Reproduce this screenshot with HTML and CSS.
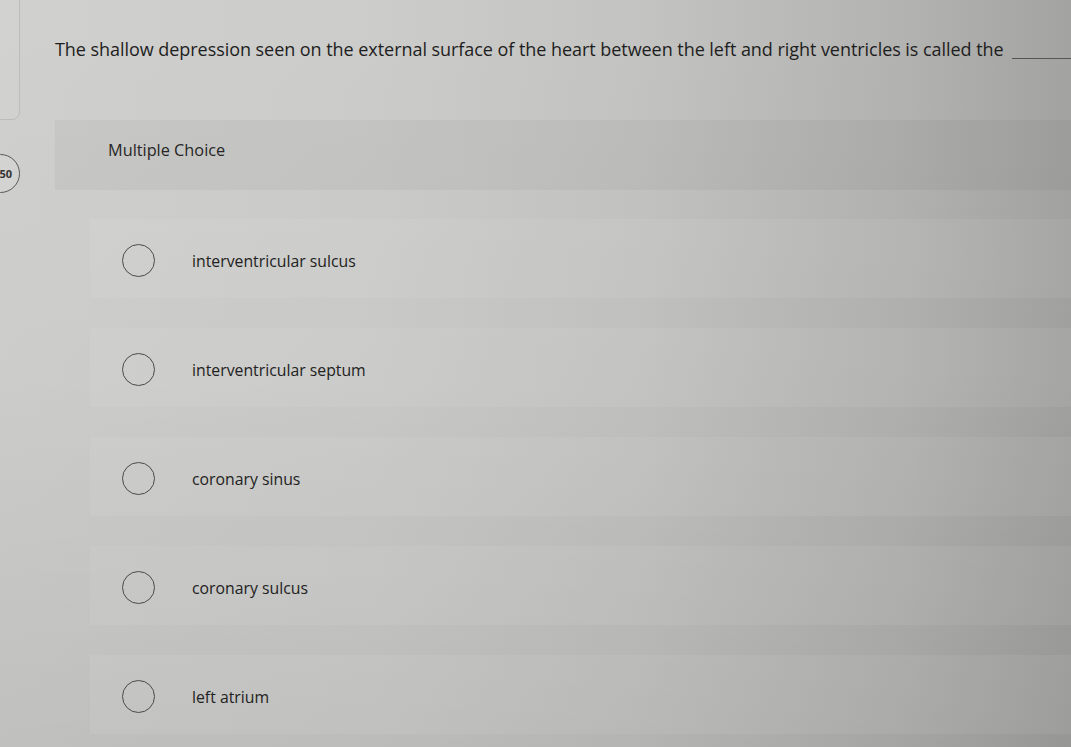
FILE: index.html
```html
<!DOCTYPE html>
<html>
<head>
<meta charset="utf-8">
<link rel="stylesheet" href="styles.css">
</head>
<body>
<div class="page">
  <aside class="rail">
    <div class="rail-card"></div>
    <div class="badge">50</div>
  </aside>
  <main class="main">
    <p class="question">The shallow depression seen on the external surface of the heart between the left and right ventricles is called the <span class="blank"></span></p>
    <div class="type-band"><span class="type-label">Multiple Choice</span></div>
    <ul class="options">
      <li class="option"><span class="radio"></span><span class="label">interventricular sulcus</span></li>
      <li class="option"><span class="radio"></span><span class="label">interventricular septum</span></li>
      <li class="option"><span class="radio"></span><span class="label">coronary sinus</span></li>
      <li class="option"><span class="radio"></span><span class="label">coronary sulcus</span></li>
      <li class="option"><span class="radio"></span><span class="label">left atrium</span></li>
    </ul>
  </main>
  <div class="edge"></div>
</div>
</body>
</html>
```

FILE: styles.css
```css
html, body {
  margin: 0;
  padding: 0;
}
body {
  width: 1071px;
  height: 747px;
  overflow: hidden;
  font-family: "Open Sans", Lato, "Liberation Sans", sans-serif;
  color: #222;
  background:
    linear-gradient(to bottom, rgba(0,0,0,0) 0%, rgba(0,0,0,0.02) 50%, rgba(0,0,0,0.08) 100%),
    linear-gradient(to right, #d0d0ce 0%, #cccccA 35%, #c3c3c1 60%, #b2b2b0 85%, #a3a3a1 100%);
}
.page {
  display: flex;
  height: 747px;
}
.rail {
  width: 55px;
  flex: none;
  display: flex;
  flex-direction: column;
}
.rail-card {
  flex: none;
  width: 30px;
  height: 124px;
  margin-top: -6px;
  margin-left: -12px;
  border: 1px solid #bdbdbb;
  border-radius: 8px;
  background: rgba(255,255,255,0.06);
}
.badge {
  flex: none;
  width: 39px;
  height: 39px;
  margin-top: 34px;
  margin-left: -19px;
  border: 1.5px solid #5a5a5a;
  border-radius: 50%;
  display: flex;
  align-items: center;
  justify-content: flex-end;
  padding-right: 7px;
  box-sizing: border-box;
  font-size: 11px;
  font-weight: 700;
  color: #333;
  background: rgba(255,255,255,0.1);
}
.main {
  flex: 1;
  display: flex;
  flex-direction: column;
}
.question {
  flex: none;
  margin: 0;
  padding-top: 38px;
  font-size: 18px;
  line-height: 22px;
  letter-spacing: -0.05px;
  color: #1e1e1e;
  white-space: nowrap;
  height: 120px;
  box-sizing: border-box;
}
.blank {
  display: inline-block;
  width: 62px;
  border-bottom: 1px solid #555;
  margin-left: 4px;
  vertical-align: -3px;
}
.type-band {
  flex: none;
  height: 70px;
  background: rgba(0,0,0,0.035);
  padding-left: 53px;
  padding-top: 19px;
  box-sizing: border-box;
}
.type-label {
  font-size: 16.3px;
  line-height: 22px;
  color: #262626;
}
.options {
  flex: none;
  list-style: none;
  margin: 16px 0 0 35px;
  padding: 0;
}
.option {
  height: 109px;
  display: flex;
  align-items: center;
  background: linear-gradient(to bottom, rgba(255,255,255,0) 12%, rgba(255,255,255,0.06) 12%, rgba(255,255,255,0.06) 84%, rgba(255,255,255,0) 84%);
}
.radio {
  width: 31px;
  height: 31px;
  border: 1.5px solid #4a4a4a;
  border-radius: 50%;
  margin-left: 32px;
  flex: none;
}
.label {
  margin-left: 37px;
  font-size: 15.8px;
  color: #222;
}
.edge {
  width: 3px;
  flex: none;
  background: #7c7c7a;
}
```
